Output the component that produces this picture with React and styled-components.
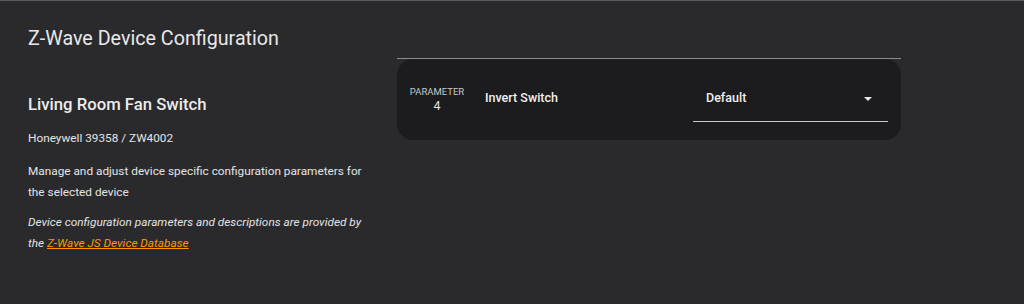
import React from "react";
import styled, { createGlobalStyle } from "styled-components";

const GlobalStyle = createGlobalStyle`
  html, body {
    margin: 0;
    padding: 0;
    background: #2a2a2d;
    font-family: Roboto, "Noto Sans", sans-serif;
    color: #e1e1e1;
  }
`;

const Page = styled.div`
  height: 304px;
  box-sizing: border-box;
  border-top: 1px solid #5a5a5d;
  padding: 0 28px;
`;

const Title = styled.h1`
  margin: 0;
  padding-top: 25px;
  font-size: 19.7px;
  font-weight: 400;
  line-height: 26px;
  color: #e8e8e8;
`;

const Section = styled.div`
  display: grid;
  grid-template-columns: 344px 504px;
  column-gap: 25px;
  margin-top: 6px;
`;

const Intro = styled.div`
  padding-top: 35px;
`;

const DeviceName = styled.h2`
  margin: 0;
  font-size: 16.7px;
  font-weight: 500;
  line-height: 24px;
  color: #ececec;
`;

const Text = styled.p`
  margin: ${(p) => p.$top || 12}px 0 0;
  font-size: 11.8px;
  line-height: 21px;
  color: #e4e4e4;
  font-style: ${(p) => (p.$italic ? "italic" : "normal")};
`;

const Link = styled.a`
  color: #ff9800;
  text-decoration: underline;
`;

const Content = styled.div`
  border-top: 1px solid #8a8a8d;
`;

const Card = styled.div`
  background: #1c1c1e;
  border-radius: 16px;
  height: 81px;
  display: flex;
  align-items: center;
  padding: 0 13px 0 12px;
`;

const ParamBox = styled.div`
  display: flex;
  flex-direction: column;
  align-items: center;
  width: 56px;
  margin-top: 1px;
`;

const ParamLabel = styled.span`
  font-size: 9.5px;
  line-height: 12px;
  color: #c8c8c8;
  text-transform: uppercase;
`;

const ParamNum = styled.span`
  font-size: 12.5px;
  line-height: 16px;
  color: #e4e4e4;
`;

const ParamName = styled.div`
  flex: 1;
  margin-left: 20px;
  font-size: 12.5px;
  font-weight: 500;
  color: #f0f0f0;
  margin-top: -5px;
`;

const Select = styled.div`
  width: 195px;
  height: 44px;
  box-sizing: border-box;
  display: flex;
  align-items: center;
  justify-content: space-between;
  padding: 0 13px 3px 13px;
  border-bottom: 1px solid #c8c8c8;
  font-size: 12.5px;
  font-weight: 500;
  color: #f0f0f0;
`;

const Caret = styled.span`
  width: 0;
  height: 0;
  border-left: 4.5px solid transparent;
  border-right: 4.5px solid transparent;
  border-top: 4.5px solid #e8e8e8;
  margin-right: 3px;
  margin-top: 2px;
`;

export default function App() {
  return (
    <>
      <GlobalStyle />
      <Page>
        <Title>Z-Wave Device Configuration</Title>
        <Section>
          <Intro>
            <DeviceName>Living Room Fan Switch</DeviceName>
            <Text $top={11}>Honeywell 39358 / ZW4002</Text>
            <Text $top={12}>
              Manage and adjust device specific configuration parameters for
              the selected device
            </Text>
            <Text $italic $top={9}>
              Device configuration parameters and descriptions are provided by
              the <Link href="#">Z-Wave JS Device Database</Link>
            </Text>
          </Intro>
          <Content>
            <Card>
              <ParamBox>
                <ParamLabel>Parameter</ParamLabel>
                <ParamNum>4</ParamNum>
              </ParamBox>
              <ParamName>Invert Switch</ParamName>
              <Select>
                Default
                <Caret />
              </Select>
            </Card>
          </Content>
        </Section>
      </Page>
    </>
  );
}
